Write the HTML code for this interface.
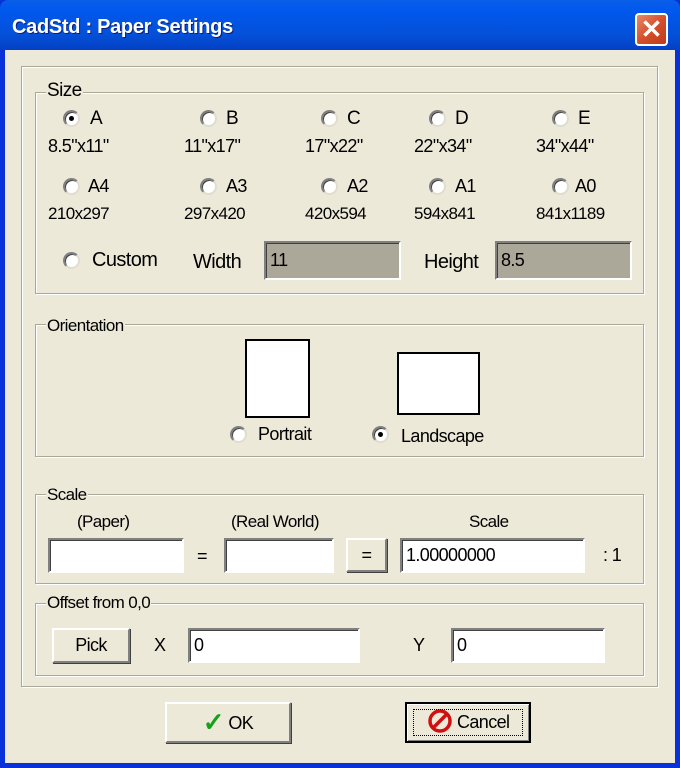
<!DOCTYPE html><html><head><style>
*{margin:0;padding:0;box-sizing:border-box}
body{width:680px;height:768px;background:#0831d9;position:relative;overflow:hidden;font-family:"Liberation Sans",sans-serif;font-size:18px;color:#000;letter-spacing:-0.6px}
.a{position:absolute;white-space:nowrap}
#title{position:absolute;left:0;top:0;width:680px;height:50px;background:linear-gradient(#0a5fe8,#0058ee 20%,#0450d8 70%,#0341c4);border-radius:8px 8px 0 0}
#body{position:absolute;left:5px;top:50px;width:670px;height:713px;background:#ece9d8}
.g{position:absolute;border:1px solid #aca899;box-shadow:1px 1px 0 #fff inset,1px 1px 0 #fff}
.lg{position:absolute;background:#ece9d8;padding:0 1px;line-height:18px}
.r{position:absolute;width:17px;height:17px;border-radius:50%;background:#fff;border:2px solid;border-color:#808080 #e0ddd0 #e0ddd0 #808080;box-shadow:inset 1px 1px 0 #404040}
.r.on::after{content:"";position:absolute;left:4px;top:4px;width:5px;height:5px;border-radius:50%;background:#000}
.e{position:absolute;background:#fff;border:2px solid;border-color:#808080 #fff #fff #808080;box-shadow:inset 1px 1px 0 #404040;padding:2px 4px;line-height:30px}
.e.d{background:#aca899}
.b{position:absolute;background:#ece9d8;border:2px solid;border-color:#fff #808080 #808080 #fff;box-shadow:1px 1px 0 #404040;text-align:center}
</style></head><body>
<div id="title"></div>
<div class="a" style="left:12px;top:16px;color:#fff;font-weight:bold;font-size:20px;text-shadow:1px 1px 0 #0a1e80;letter-spacing:-0.3px">CadStd : Paper Settings</div>
<div class="a" style="left:635px;top:13px;width:33px;height:33px;border:2px solid #fff;border-radius:4px;background:linear-gradient(135deg,#e88a6a,#d4502c 50%,#c03a18);color:#fff;font-size:26px;font-weight:bold;text-align:center;line-height:28px;letter-spacing:0">✕</div>
<div id="body"></div>
<div class="g" style="left:21px;top:66px;width:637px;height:621px"></div>

<div class="g" style="left:35px;top:92px;width:609px;height:202px"></div>
<div class="lg" style="left:46px;top:82px;font-size:19px">Size</div>
<div class="r on" style="left:63px;top:110px"></div><div class="a" style="left:90px;top:108px;font-size:19px">A</div><div class="a" style="left:48px;top:136px">8.5"x11"</div>
<div class="r" style="left:200px;top:110px"></div><div class="a" style="left:226px;top:108px;font-size:19px">B</div><div class="a" style="left:184px;top:136px">11"x17"</div>
<div class="r" style="left:321px;top:110px"></div><div class="a" style="left:347px;top:108px;font-size:19px">C</div><div class="a" style="left:305px;top:136px">17"x22"</div>
<div class="r" style="left:429px;top:110px"></div><div class="a" style="left:455px;top:108px;font-size:19px">D</div><div class="a" style="left:414px;top:136px">22"x34"</div>
<div class="r" style="left:552px;top:110px"></div><div class="a" style="left:578px;top:108px;font-size:19px">E</div><div class="a" style="left:536px;top:136px">34"x44"</div>
<div class="r" style="left:63px;top:178px"></div><div class="a" style="left:88px;top:176px">A4</div><div class="a" style="left:48px;top:204px;font-size:17px">210x297</div>
<div class="r" style="left:200px;top:178px"></div><div class="a" style="left:226px;top:176px">A3</div><div class="a" style="left:184px;top:204px;font-size:17px">297x420</div>
<div class="r" style="left:321px;top:178px"></div><div class="a" style="left:347px;top:176px">A2</div><div class="a" style="left:305px;top:204px;font-size:17px">420x594</div>
<div class="r" style="left:429px;top:178px"></div><div class="a" style="left:455px;top:176px">A1</div><div class="a" style="left:414px;top:204px;font-size:17px">594x841</div>
<div class="r" style="left:552px;top:178px"></div><div class="a" style="left:575px;top:176px">A0</div><div class="a" style="left:536px;top:204px;font-size:17px">841x1189</div>
<div class="r" style="left:63px;top:252px"></div><div class="a" style="left:92px;top:249px;font-size:20px">Custom</div>
<div class="a" style="left:193px;top:251px;font-size:20px">Width</div>
<div class="e d" style="left:264px;top:241px;width:137px;height:39px">11</div>
<div class="a" style="left:424px;top:251px;font-size:20px">Height</div>
<div class="e d" style="left:495px;top:241px;width:137px;height:39px">8.5</div>

<div class="g" style="left:35px;top:324px;width:609px;height:133px"></div>
<div class="lg" style="left:46px;top:317px;font-size:17px">Orientation</div>
<div class="a" style="left:245px;top:339px;width:65px;height:79px;background:#fff;border:2px solid #000"></div>
<div class="a" style="left:397px;top:352px;width:83px;height:63px;background:#fff;border:2px solid #000"></div>
<div class="r" style="left:230px;top:426px"></div><div class="a" style="left:258px;top:424px">Portrait</div>
<div class="r on" style="left:372px;top:426px"></div><div class="a" style="left:401px;top:426px">Landscape</div>

<div class="g" style="left:35px;top:494px;width:609px;height:90px"></div>
<div class="lg" style="left:46px;top:486px;font-size:17px">Scale</div>
<div class="a" style="left:77px;top:512px;font-size:17px">(Paper)</div>
<div class="a" style="left:231px;top:512px;font-size:17px">(Real World)</div>
<div class="a" style="left:469px;top:512px;font-size:17px">Scale</div>
<div class="e" style="left:48px;top:538px;width:136px;height:35px"></div>
<div class="a" style="left:197px;top:546px">=</div>
<div class="e" style="left:224px;top:538px;width:110px;height:35px"></div>
<div class="b" style="left:346px;top:538px;width:41px;height:34px;line-height:30px">=</div>
<div class="e" style="left:400px;top:538px;width:185px;height:35px;line-height:26px">1.00000000</div>
<div class="a" style="left:603px;top:545px">: 1</div>

<div class="g" style="left:35px;top:603px;width:609px;height:73px"></div>
<div class="lg" style="left:46px;top:594px;font-size:17px">Offset from 0,0</div>
<div class="b" style="left:52px;top:628px;width:78px;height:35px;line-height:30px">Pick</div>
<div class="a" style="left:154px;top:635px">X</div>
<div class="e" style="left:188px;top:628px;width:172px;height:35px;line-height:26px">0</div>
<div class="a" style="left:413px;top:635px">Y</div>
<div class="e" style="left:451px;top:628px;width:154px;height:35px;line-height:26px">0</div>

<div class="b" style="left:165px;top:702px;width:126px;height:41px;line-height:37px"><span style="color:#18a018;font-size:26px;font-weight:bold;vertical-align:-2px">✓</span> OK</div>
<div class="b" style="left:405px;top:702px;width:126px;height:41px;line-height:37px;border:2px solid #000;box-shadow:inset 1px 1px 0 #fff,inset -1px -1px 0 #808080"><div style="position:absolute;left:6px;top:5px;right:6px;bottom:5px;border:1px dotted #000"></div><svg width="26" height="26" viewBox="0 0 26 26" style="vertical-align:-6px"><circle cx="13" cy="13" r="10" fill="none" stroke="#d01010" stroke-width="3.5"/><line x1="6" y1="20" x2="20" y2="6" stroke="#d01010" stroke-width="3.5"/></svg> Cancel</div>
</body></html>
